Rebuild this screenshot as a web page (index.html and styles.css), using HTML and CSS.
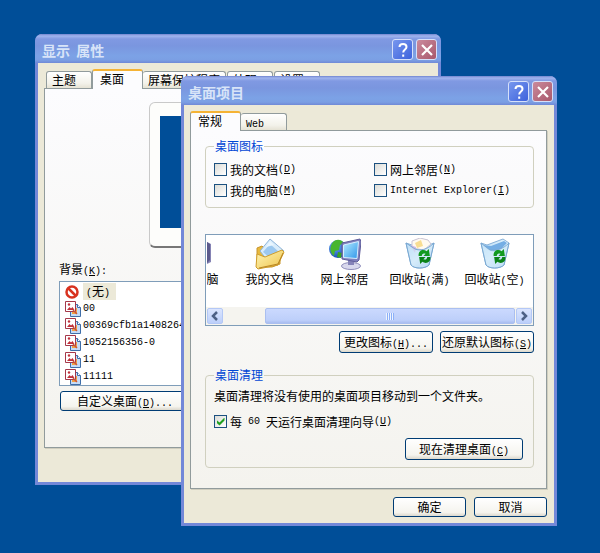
FILE: index.html
```html
<!DOCTYPE html>
<html lang="zh-CN">
<head>
    <meta charset="UTF-8">
    <meta name="viewport" content="width=device-width, initial-scale=1.0">
    <title>显示 属性</title>
    <link rel="stylesheet" href="styles.css">
</head>
<body>

<!-- Shared icons -->
<svg class="defs" width="0" height="0" aria-hidden="true">
    <defs>
        <linearGradient id="screen" x1="0" y1="0" x2="1" y2="1">
            <stop offset="0" stop-color="#b5ecff"/>
            <stop offset="1" stop-color="#2f96ea"/>
        </linearGradient>
        <linearGradient id="folder" x1="0" y1="0" x2="1" y2="1">
            <stop offset="0" stop-color="#fff6b8"/>
            <stop offset="1" stop-color="#eec44c"/>
        </linearGradient>
        <linearGradient id="bin" x1="0" y1="0" x2="1" y2="1">
            <stop offset="0" stop-color="#a9d3f3"/>
            <stop offset="0.5" stop-color="#e4f4fd"/>
            <stop offset="1" stop-color="#8fbfe6"/>
        </linearGradient>
        <radialGradient id="globe" cx="0.35" cy="0.3" r="0.8">
            <stop offset="0" stop-color="#6fb4ff"/>
            <stop offset="1" stop-color="#0b3fae"/>
        </radialGradient>
    </defs>
    <symbol id="picture" viewBox="0 0 16 16">
        <path d="M5.500 3.500h7l3 3v9h-10z" fill="#c5dcf8" stroke="#3f6ea8"/>
        <path d="M12.500 3.500v3h3" fill="#fff" stroke="#3f6ea8"/>
        <path d="M8 7h4v6H7v-3z" fill="#f3a044"/>
        <path d="M0.500 0.500h10v10H0.500z" fill="#fff" stroke="#a5384a"/>
        <path d="M2 9l2.500-3 1.500 1.500 1.500-1.500 2 3z" fill="#c0303a"/>
        <circle cx="4" cy="3.500" r="1.200" fill="#c0303a"/>
        <path d="M8 9l4 4" stroke="#c9573a" stroke-width="1.500"/>
    </symbol>
    <symbol id="recycle" viewBox="0 0 12 14">
        <path d="M0.500 6.500C0 1 5 0 8 2l2-2 1 6.500H5L7 4.500C5 3.500 3.500 4.500 3.500 6.500z" fill="#129a1f"/>
        <path d="M11.500 7.500C12 13 7 14 4 12l-2 2-1-6.500h6L5 9.500c2 1 3.500 0 3.500-2z" fill="#0b8317"/>
    </symbol>
</svg>

<section class="window display-window">
    <header class="title-bar">
        <h1>显示&nbsp; 属性</h1>
        <button class="title-button help" aria-label="帮助">
            <svg width="18" height="18" viewBox="0 0 18 18"><path d="M5.500 6c0-4 7-4 7 0 0 2.500-3.300 2.500-3.300 5.500M9.200 13.500v2.200" fill="none" stroke="#fff" stroke-width="2"/></svg>
        </button>
        <button class="title-button close" aria-label="关闭">
            <svg width="18" height="18" viewBox="0 0 18 18"><path d="M4 4l10 10M14 4L4 14" stroke="#fff" stroke-width="2.200"/></svg>
        </button>
    </header>
    <div class="window-body">
        <div class="tabs" role="tablist">
            <button class="tab theme-tab" role="tab">主题</button>
            <button class="tab active" role="tab" aria-selected="true">桌面</button>
            <button class="tab wide-tab" role="tab">屏幕保护程序</button>
            <button class="tab" role="tab">外观</button>
            <button class="tab" role="tab">设置</button>
        </div>
        <div class="panel">
            <div class="monitor"><div class="monitor-screen"></div></div>
            <div class="list-label">背景<span class="en">(<u>K</u>):</span></div>
            <ul class="backgrounds">
                <li>
                    <svg width="16" height="16" viewBox="0 0 16 16"><circle cx="7" cy="8" r="5.500" fill="#fff" stroke="#d8321f" stroke-width="2.500"/><path d="M3.500 4.500l7 7" stroke="#d8321f" stroke-width="2.500"/></svg>
                    <span class="selected"><span class="en">(</span>无<span class="en">)</span></span>
                </li>
                <li><svg width="16" height="16"><use href="#picture"/></svg><span class="en">00</span></li>
                <li><svg width="16" height="16"><use href="#picture"/></svg><span class="en">00369cfb1a1408264</span></li>
                <li><svg width="16" height="16"><use href="#picture"/></svg><span class="en">1052156356-0</span></li>
                <li><svg width="16" height="16"><use href="#picture"/></svg><span class="en">11</span></li>
                <li><svg width="16" height="16"><use href="#picture"/></svg><span class="en">11111</span></li>
            </ul>
            <button class="button customize">自定义桌面<span class="en">(<u>D</u>)...</span></button>
        </div>
    </div>
</section>

<section class="window items-window">
    <header class="title-bar">
        <h1>桌面项目</h1>
        <button class="title-button help" aria-label="帮助">
            <svg width="18" height="18" viewBox="0 0 18 18"><path d="M5.500 6c0-4 7-4 7 0 0 2.500-3.300 2.500-3.300 5.500M9.200 13.500v2.200" fill="none" stroke="#fff" stroke-width="2"/></svg>
        </button>
        <button class="title-button close" aria-label="关闭">
            <svg width="18" height="18" viewBox="0 0 18 18"><path d="M4 4l10 10M14 4L4 14" stroke="#fff" stroke-width="2.200"/></svg>
        </button>
    </header>
    <div class="window-body">
        <div class="tabs" role="tablist">
            <button class="tab active" role="tab" aria-selected="true">常规</button>
            <button class="tab" role="tab"><span class="en">Web</span></button>
        </div>
        <div class="panel">
            <fieldset class="icon-group">
                <legend>桌面图标</legend>
                <label><input type="checkbox">我的文档<span class="en">(<u>D</u>)</span></label>
                <label><input type="checkbox">网上邻居<span class="en">(<u>N</u>)</span></label>
                <label><input type="checkbox">我的电脑<span class="en">(<u>M</u>)</span></label>
                <label><input type="checkbox"><span class="en">Internet Explorer(<u>I</u>)</span></label>
            </fieldset>

            <div class="icon-list">
                <div class="icons">
                    <figure>
                        <svg width="32" height="32" viewBox="0 0 32 32"><path d="M4 4h24l4 2v18l-4 2H4z" fill="#8583b4"/><path d="M28 4l3 2v16l-3 3z" fill="#5b5a8c"/><path d="M6 7h19v14H6z" fill="url(#screen)"/></svg>
                        <figcaption>我的电脑</figcaption>
                    </figure>
                    <figure>
                        <svg width="32" height="32" viewBox="0 0 32 32">
                            <path d="M3 10l5-2 3 3 15 1v14l-8 3H3z" fill="#e8b93c" stroke="#c8952c"/>
                            <path d="M16 1L30 13 17 27 6 13z" fill="#d8ecfb" stroke="#8db4da"/>
                            <path d="M16 6l9 8-7 8-9-8z" fill="#9cc8ef"/>
                            <path d="M12 9l4-6 4 4z" fill="#e9f6ff"/>
                            <path d="M3 16l8 3 17-7 2 2-6 13-20 4-2-2z" fill="url(#folder)" stroke="#cf9d2c"/>
                            <path d="M5 30l19-4 5-11" fill="none" stroke="#b88522"/>
                        </svg>
                        <figcaption>我的文档</figcaption>
                    </figure>
                    <figure>
                        <svg width="32" height="32" viewBox="0 0 32 32">
                            <circle cx="9" cy="11" r="9" fill="url(#globe)"/>
                            <path d="M4 4c4-4 9-2 11 1l-4 2-1 5-4 1-1 5c-4-3-5-9-1-14z" fill="#47b530"/>
                            <path d="M9 14l4 1-1 5-4-1z" fill="#39a323"/>
                            <ellipse cx="22" cy="28" rx="9.500" ry="3.500" fill="#d8d8ed" stroke="#8d8cba"/>
                            <path d="M19 21l6 1v5h-6z" fill="#8583b9"/>
                            <path d="M13 5l18-4 1 3-2 18-2 2-15-3z" fill="#8080bd" stroke="#605f9c"/>
                            <path d="M14.500 7l15-3.500-1.500 17-13.500-1z" fill="url(#screen)" stroke="#d9efff"/>
                        </svg>
                        <figcaption>网上邻居</figcaption>
                    </figure>
                    <figure>
                        <svg width="32" height="32" viewBox="0 0 32 32">
                            <path d="M2 5l5 22c3 4 14 4 18 0l5-22-13 5z" fill="url(#bin)" stroke="#8ab2d8"/>
                            <path d="M8 3l8-3 8 2 3 4-7 6-12-2z" fill="#fffaf0" stroke="#c9c4d4"/>
                            <path d="M11 5l6-3 2 6-6 2z" fill="#f8dd92"/>
                            <path d="M6 7l6 2-1 6z" fill="#d3b5e2"/>
                            <path d="M2 5l9 6c5 2 12 1 19-6l-5 22c-4 4-15 4-18 0z" fill="#cde6f8" fill-opacity="0.6" stroke="#79a8d2"/>
                            <use href="#recycle" x="14" y="11" width="13" height="15"/>
                        </svg>
                        <figcaption>回收站<span class="en">(</span>满<span class="en">)</span></figcaption>
                    </figure>
                    <figure>
                        <svg width="32" height="32" viewBox="0 0 32 32">
                            <path d="M2 5l6 2 16-6 6 4-5 22c-4 4-15 4-18 0z" fill="url(#bin)" stroke="#8ab2d8"/>
                            <path d="M4 7l8 1 13-5 3 2-8 8c-6 2-12-1-16-6z" fill="#75aee4"/>
                            <path d="M2 5l9 7c6 1 13-1 19-7l-5 22c-4 4-15 4-18 0z" fill="#cfe8fa" fill-opacity="0.7" stroke="#79a8d2"/>
                            <use href="#recycle" x="14" y="11" width="13" height="15"/>
                        </svg>
                        <figcaption>回收站<span class="en">(</span>空<span class="en">)</span></figcaption>
                    </figure>
                </div>
                <div class="scrollbar">
                    <button class="scroll-button" aria-label="向左滚动">
                        <svg width="8" height="10" viewBox="0 0 8 10"><path d="M6 1L2 5l4 4" fill="none" stroke="#4d6185" stroke-width="2.500"/></svg>
                    </button>
                    <div class="scroll-track"><div class="scroll-thumb"><i class="grip"></i></div></div>
                    <button class="scroll-button" aria-label="向右滚动">
                        <svg width="8" height="10" viewBox="0 0 8 10"><path d="M2 1l4 4-4 4" fill="none" stroke="#4d6185" stroke-width="2.500"/></svg>
                    </button>
                </div>
            </div>

            <div class="icon-buttons">
                <button class="button">更改图标<span class="en">(<u>H</u>)...</span></button>
                <button class="button">还原默认图标<span class="en">(<u>S</u>)</span></button>
            </div>

            <fieldset class="cleanup-group">
                <legend>桌面清理</legend>
                <p>桌面清理将没有使用的桌面项目移动到一个文件夹。</p>
                <label><input type="checkbox" checked>每<span class="en">&nbsp;60&nbsp;</span>天运行桌面清理向导<span class="en">(<u>U</u>)</span></label>
                <button class="button clean-now">现在清理桌面<span class="en">(<u>C</u>)</span></button>
            </fieldset>
        </div>
        <footer class="dialog-buttons">
            <button class="button">确定</button>
            <button class="button">取消</button>
        </footer>
    </div>
</section>

</body>
</html>
```
FILE: styles.css
```css
* {
    box-sizing: border-box;
}
body {
    margin: 0;
    min-height: 100vh;
    background-color: #004e98;
    color: #000;
    font-family: "Noto Sans CJK SC", sans-serif;
    font-size: 12px;
    line-height: 14px;
    overflow: hidden;
}
button {
    margin: 0;
    padding: 0;
    font: inherit;
    color: inherit;
    white-space: nowrap;
}
.defs {
    position: absolute;
}
/* Latin text is half the width of a Chinese character */
.en {
    font-family: "Liberation Mono", monospace;
    font-size: 10px;
    line-height: 10px;
}

/* Windows */
.window {
    position: absolute;
    border: 3px solid #7388d8;
    border-top: 0;
    border-radius: 7px 7px 0 0;
    background-color: #ece9d8;
}
.display-window {
    left: 35px;
    top: 34px;
    width: 406px;
}
.items-window {
    left: 181px;
    top: 76px;
    width: 376px;
}
.title-bar {
    display: flex;
    align-items: center;
    gap: 3px;
    height: 29px;
    margin: 0 -3px;
    padding: 2px 4px 0 7px;
    border-radius: 7px 7px 0 0;
    background: linear-gradient(#6f84d0 0, #a0b4ee 2px, #8099e2 5px, #7a96df 12px, #7ca2e6 22px, #7b9fe4 26px, #7089d6 100%);
}
.title-bar h1 {
    flex: 1;
    margin: 0;
    font-size: 14px;
    font-weight: bold;
    color: #d8e4f8;
}
.title-button {
    display: grid;
    place-items: center;
    width: 21px;
    height: 21px;
    border: 1px solid #d5e0fa;
    border-radius: 3px;
}
.help {
    background: linear-gradient(135deg, #7797ee, #3d62dc);
}
.close {
    background: linear-gradient(135deg, #ca8a9c, #a9586c);
}
.window-body {
    padding: 6px 7px 6px 6px;
}
.display-window .window-body {
    padding-bottom: 34px;
}

/* Tabs */
.tabs {
    position: relative;
    display: flex;
    align-items: flex-end;
    height: 20px;
}
.tab {
    height: 17px;
    min-width: 46px;
    margin-bottom: 1px;
    padding: 0 5px;
    text-align: left;
    border: 1px solid #919b9c;
    border-bottom: 0;
    border-radius: 3px 3px 0 0;
    background: linear-gradient(#fff, #f3f2ea 70%, #e5e2d4);
}
.tab + .tab:not(.active) {
    margin-right: 1px;
}
.active {
    height: 20px;
    min-width: 51px;
    margin-bottom: 0;
    padding: 0 7px 3px;
    border-top: 2px solid #f5b335;
    background: #fcfcfe;
}
.active + .tab {
    border-left: 0;
}
.theme-tab {
    margin-left: 2px;
}
.wide-tab {
    min-width: 82px;
}
.panel {
    margin-top: -1px;
    border: 1px solid #919b9c;
    background: linear-gradient(#fcfcfe, #f4f3ee);
    box-shadow: 1px 1px #d0cebf;
}
.display-window .panel {
    padding: 13px 14px 36px;
}
.items-window .panel {
    padding: 8px 12px 20px 14px;
}

/* Background tab */
.monitor {
    width: 178px;
    height: 146px;
    margin: 0 auto 10px;
    padding: 13px 10px 18px;
    border: 1px solid #c9c9c9;
    border-bottom: 2px solid #777;
    border-radius: 6px;
    background-color: #fdfdfb;
}
.monitor-screen {
    height: 100%;
    background-color: #004e98;
}
.list-label {
    height: 23px;
    padding-top: 4px;
}
.backgrounds {
    width: 250px;
    margin: 0 0 5px;
    padding: 1px 5px 0;
    border: 1px solid #7f9db9;
    background-color: #fff;
    list-style: none;
}
.backgrounds li {
    display: flex;
    align-items: center;
    gap: 2px;
    height: 17px;
}
.selected {
    padding: 1px 6px 1px 3px;
    background-color: #ece9d8;
}

/* Buttons */
.button {
    height: 20px;
    border: 1px solid #003c74;
    border-radius: 3px;
    background: linear-gradient(#fff, #f5f4ee 80%, #dcd8cc);
}
.customize {
    display: block;
    width: 130px;
    margin-left: 1px;
}
.icon-buttons {
    display: flex;
    justify-content: flex-end;
    gap: 7px;
    margin: 5px 0 15px;
}
.icon-buttons .button {
    width: 94px;
    height: 22px;
}
.dialog-buttons {
    display: flex;
    justify-content: flex-end;
    gap: 8px;
    margin-top: 8px;
}
.dialog-buttons .button {
    width: 73px;
}

/* Groups */
fieldset {
    margin: 0;
    padding: 0 8px;
    border: 1px solid #d0d0bf;
    border-radius: 4px;
}
legend {
    padding: 0 1px;
    color: #0046d5;
}
label {
    display: flex;
    align-items: center;
    height: 21px;
}
input[type="checkbox"] {
    appearance: none;
    display: grid;
    place-items: center;
    width: 13px;
    height: 13px;
    margin: 0 3px 0 0;
    border: 1px solid #1c5180;
    background: linear-gradient(135deg, #dcdcd7, #fff);
}
input[type="checkbox"]:checked::before {
    content: "";
    width: 8px;
    height: 8px;
    background-color: #21a121;
    clip-path: polygon(0 30%, 38% 62%, 100% 0, 100% 38%, 38% 100%, 0 66%);
}
.icon-group {
    display: grid;
    grid-template-columns: 160px 1fr;
    padding-top: 6px;
    padding-bottom: 6px;
}
.cleanup-group {
    display: flex;
    flex-direction: column;
    padding-top: 4px;
    padding-bottom: 7px;
}
.cleanup-group p {
    margin: 0 0 5px;
    line-height: 20px;
}
.clean-now {
    align-self: flex-end;
    width: 118px;
    height: 22px;
    margin: 6px 2px 0 0;
}

/* Icon list */
.icon-list {
    margin-top: 26px;
    border: 1px solid #7f9db9;
    background-color: #fff;
}
.icons {
    display: flex;
    justify-content: flex-end;
    height: 72px;
    margin-left: 1px;
    padding: 3px 1px 0;
    overflow: hidden;
}
.icons figure {
    flex: none;
    display: flex;
    flex-direction: column;
    align-items: center;
    gap: 2px;
    width: 75px;
    margin: 0;
}
.scrollbar {
    display: flex;
    gap: 1px;
    height: 18px;
    padding: 1px;
    background-color: #f5f4ef;
}
.scroll-button {
    display: grid;
    place-items: center;
    width: 16px;
    border: 1px solid #b4c8f6;
    border-radius: 2px;
    background: linear-gradient(#dbe5fe, #bccffa);
}
.scroll-track {
    flex: 1;
    display: flex;
    justify-content: flex-end;
}
.scroll-thumb {
    display: grid;
    place-items: center;
    width: 86%;
    border: 1px solid #aabff0;
    border-radius: 2px;
    background: linear-gradient(#cbd9fe, #bdcffa 80%, #a9bdf0);
}
.grip {
    width: 8px;
    height: 7px;
    background: repeating-linear-gradient(90deg, #eef4fe 0 1px, #8cb0f8 1px 2px);
}
```
